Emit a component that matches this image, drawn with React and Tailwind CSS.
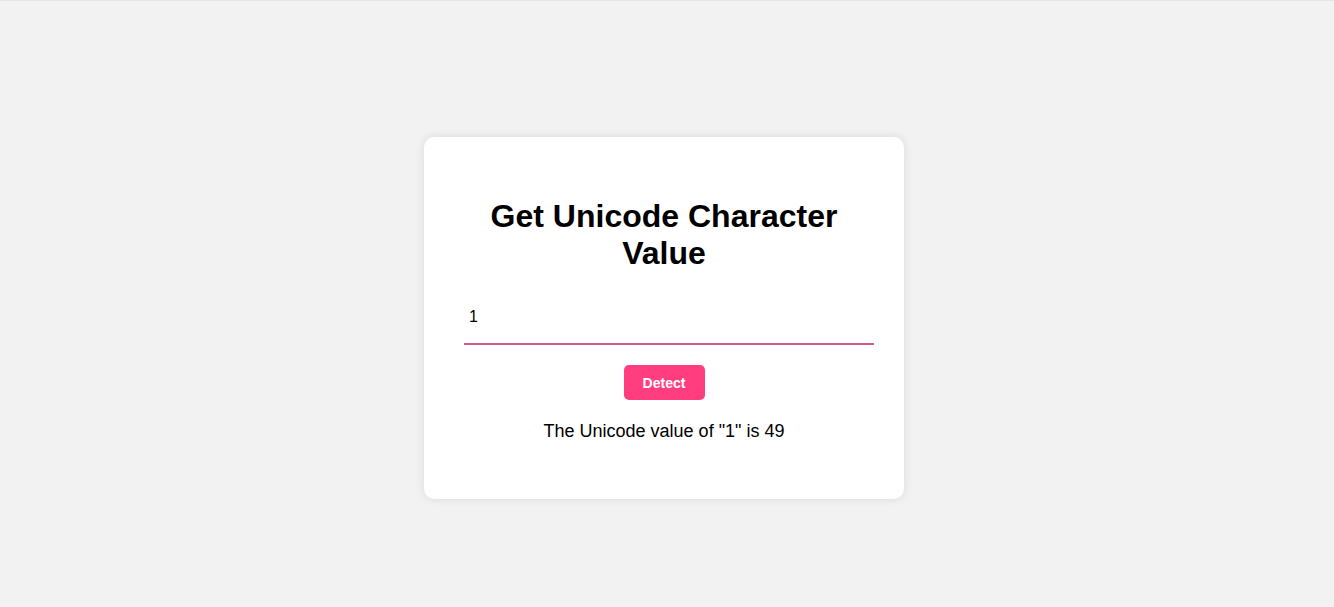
import React, { useState } from 'react';

const App = () => {
  const [value, setValue] = useState('1');
  const [result, setResult] = useState('The Unicode value of "1" is 49');

  const detect = () => {
    if (!value) {
      setResult('Please enter a character');
      return;
    }
    setResult(`The Unicode value of "${value[0]}" is ${value.codePointAt(0)}`);
  };

  return (
    <div className="min-h-screen bg-[#f2f2f2] border-t border-[#e6e6e6] flex items-center justify-center pt-[28px] pr-[6px] font-['Liberation_Sans',Arial,sans-serif] text-black">
      <div className="w-[480px] bg-white rounded-[10px] p-10 shadow-[0_0_10px_rgba(0,0,0,0.1)] text-center">
        <h1 className="text-[32px] font-bold leading-[1.15] my-[21px]">Get Unicode Character Value</h1>
        <input
          type="text"
          value={value}
          onChange={(e) => setValue(e.target.value)}
          className="block w-[410px] px-[5px] pt-[16px] pb-[17px] text-base leading-[18px] border-b-2 border-[#d6578b] outline-none"
        />
        <button
          onClick={detect}
          className="mt-[20px] w-[81px] h-[35px] bg-[#ff3d7f] text-white text-sm font-bold rounded-[5px]"
        >
          Detect
        </button>
        <p className="text-lg leading-[1.15] mt-[21px] mb-[17px]">{result}</p>
      </div>
    </div>
  );
};

export default App;
